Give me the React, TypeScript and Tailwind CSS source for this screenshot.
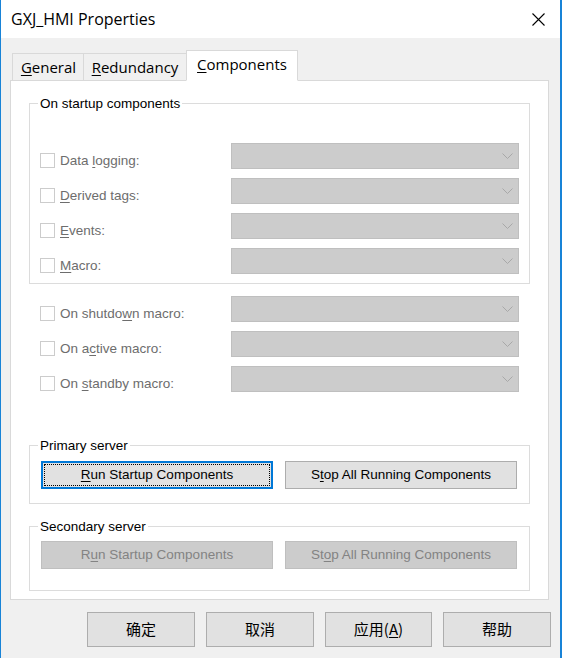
import React from "react"

const sans = "font-['Liberation_Sans',Arial,sans-serif]"
const segoe = "font-['Segoe_UI','Open_Sans',sans-serif]"
const cjk = "font-['Noto_Sans_CJK_SC','Noto_Sans',sans-serif]"

// text with one access-key letter underlined
function Key({ text, at }: { text: string; at: number }) {
  return (
    <>
      {text.slice(0, at)}
      <u className="underline-offset-[2px]">{text[at]}</u>
      {text.slice(at + 1)}
    </>
  )
}

function Combo() {
  return (
    <div className="w-[288px] h-[26px] bg-[#cccccc] border border-[#bfbfbf] flex items-center justify-end pr-[5px]">
      <svg width="11" height="7" viewBox="0 0 11 7">
        <path d="M0.5 0.5 L5.5 5.5 L10.5 0.5" stroke="#a8a8a8" strokeWidth="1" fill="none" />
      </svg>
    </div>
  )
}

function Row({ label, at }: { label: string; at: number }) {
  return (
    <div className="flex items-end">
      <div className="w-[191px] flex items-center gap-[5px] mb-[1px]">
        <div className="w-[15px] h-[15px] border border-[#cccccc] bg-white" />
        <span className={`${sans} text-[13.5px] leading-[15px] text-[#6d6d6d]`}>
          <Key text={label} at={at} />
        </span>
      </div>
      <Combo />
    </div>
  )
}

function Group({ title, className, children }: { title: string; className?: string; children: React.ReactNode }) {
  return (
    <div className={`border border-[#dcdcdc] ${className ?? ""}`}>
      <div className={`-mt-[9px] ml-[8px] px-[2px] w-fit bg-white ${sans} text-[13.5px] leading-[18px] text-black`}>
        {title}
      </div>
      {children}
    </div>
  )
}

function ServerButtons({ enabled }: { enabled: boolean }) {
  if (enabled) {
    return (
      <div className="flex gap-[12px] pl-[11px] mt-[6px]">
        <div className="w-[232px] h-[28px] border-2 border-[#0078d7] bg-[#e1e1e1] p-[1px]">
          <div className={`h-full border border-dotted border-black flex items-center justify-center ${sans} text-[13.5px] text-black`}>
            <Key text="Run Startup Components" at={0} />
          </div>
        </div>
        <div className={`w-[232px] h-[28px] border border-[#adadad] bg-[#e1e1e1] flex items-center justify-center ${sans} text-[13.5px] text-black`}>
          <Key text="Stop All Running Components" at={1} />
        </div>
      </div>
    )
  }
  return (
    <div className="flex gap-[12px] pl-[11px] mt-[5px]">
      <div className={`w-[232px] h-[28px] border border-[#bfbfbf] bg-[#cccccc] flex items-center justify-center ${sans} text-[13.5px] text-[#838383]`}>
        <Key text="Run Startup Components" at={1} />
      </div>
      <div className={`w-[232px] h-[28px] border border-[#bfbfbf] bg-[#cccccc] flex items-center justify-center ${sans} text-[13.5px] text-[#838383]`}>
        <Key text="Stop All Running Components" at={2} />
      </div>
    </div>
  )
}

export default function App() {
  return (
    <div className="w-[562px] h-[658px] bg-[#f0f0f0] border-l border-r-2 border-[#1883d7] flex flex-col overflow-hidden">
      {/* title bar */}
      <div className="h-[38px] bg-white flex items-center justify-between pl-[10px] pr-[15px]">
        <span className={`${segoe} text-[16px] text-black`}>GXJ_HMI Properties</span>
        <svg width="13" height="13" viewBox="0 0 13 13">
          <path d="M0.5 0.5 L12.5 12.5 M12.5 0.5 L0.5 12.5" stroke="#000" strokeWidth="1.1" />
        </svg>
      </div>

      <div className="pl-[9px] pr-[11px]">
        {/* tabs */}
        <div className={`relative z-10 flex items-end mt-[12px] ml-[2px] -mb-px ${segoe} text-[15px] text-black`}>
          <div className="w-[72px] h-[28px] border border-[#d9d9d9] bg-[#f0f0f0] flex items-center justify-center pl-[1px]">
            <Key text="General" at={0} />
          </div>
          <div className="-ml-px w-[104px] h-[28px] border border-[#d9d9d9] bg-[#f0f0f0] flex items-center justify-center">
            <Key text="Redundancy" at={0} />
          </div>
          <div className="-ml-px w-[112px] h-[31px] border border-[#d9d9d9] border-b-white bg-white flex items-center justify-center pb-[2px]">
            <Key text="Components" at={0} />
          </div>
        </div>

        {/* tab panel */}
        <div className="h-[520px] bg-white border border-[#d9d9d9] px-[18px]">
          <Group title="On startup components" className="mt-[22px] pb-[9px]">
            <div className="flex flex-col gap-[9px] mt-[30px] pl-[10px]">
              <Row label="Data logging:" at={5} />
              <Row label="Derived tags:" at={0} />
              <Row label="Events:" at={0} />
              <Row label="Macro:" at={0} />
            </div>
          </Group>

          <div className="flex flex-col gap-[9px] mt-[12px] pl-[11px]">
            <Row label="On shutdown macro:" at={9} />
            <Row label="On active macro:" at={4} />
            <Row label="On standby macro:" at={3} />
          </div>

          <Group title="Primary server" className="mt-[53px] pb-[14px]">
            <ServerButtons enabled />
          </Group>

          <Group title="Secondary server" className="mt-[22px] pb-[21px]">
            <ServerButtons enabled={false} />
          </Group>
        </div>

        {/* dialog buttons */}
        <div className={`flex justify-end gap-[11px] mt-[12px] -mr-[2px] ${cjk} text-[15px] text-black`}>
          <div className="w-[108px] h-[35px] border border-[#adadad] bg-[#e1e1e1] flex items-center justify-center">确定</div>
          <div className="w-[108px] h-[35px] border border-[#adadad] bg-[#e1e1e1] flex items-center justify-center">取消</div>
          <div className="w-[107px] h-[35px] border border-[#adadad] bg-[#e1e1e1] flex items-center justify-center">
            应用(<u className="underline-offset-[2px]">A</u>)
          </div>
          <div className="w-[108px] h-[35px] border border-[#adadad] bg-[#e1e1e1] flex items-center justify-center">帮助</div>
        </div>
      </div>
    </div>
  )
}
